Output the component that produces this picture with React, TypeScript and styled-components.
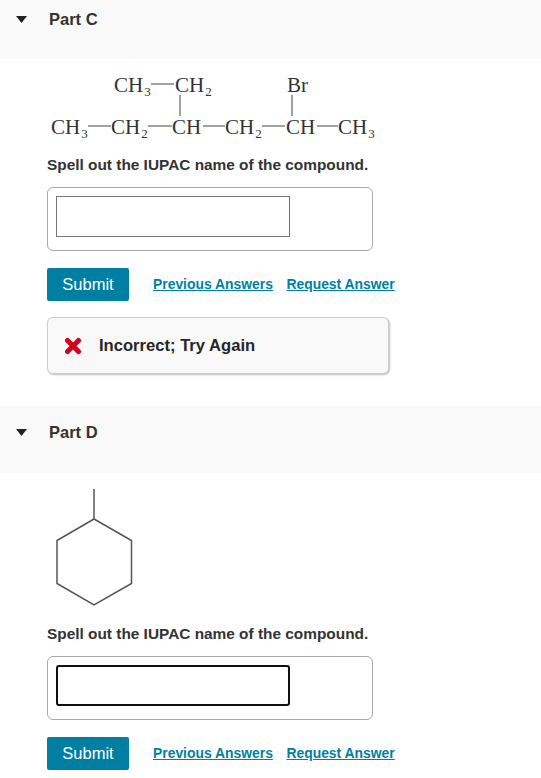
import styled, { createGlobalStyle } from 'styled-components';

const GlobalStyle = createGlobalStyle`
  html, body {
    margin: 0;
    padding: 0;
    background: #fff;
    overflow: hidden;
  }
  body {
    font-family: "Liberation Sans", Arial, sans-serif;
    color: #333;
  }
`;

// ========================
// Part header
// ========================

const PartHeader = styled.div<{ $scrolled?: boolean }>`
  display: flex;
  align-items: flex-start;
  height: ${({ $scrolled }) => ($scrolled ? '59px' : '67px')};
  padding-top: ${({ $scrolled }) => ($scrolled ? '10px' : '17px')};
  padding-left: 16px;
  box-sizing: border-box;
  background: #f9f9f9;
`;

const Caret = styled.svg`
  display: block;
  width: 11px;
  height: 7px;
  margin-top: 6px;
  margin-right: 22px;
  fill: #222;
`;

const PartTitle = styled.h2`
  margin: 0;
  font-size: 16.5px;
  line-height: 18px;
  font-weight: 700;
  color: #333;
`;

// ========================
// Part body
// ========================

const PartBody = styled.div`
  padding-left: 47px;
`;

const Figure = styled.div<{ $height: number }>`
  height: ${({ $height }) => $height}px;
  margin-left: -47px;
`;

const Prompt = styled.p`
  margin: 0 0 13px;
  font-size: 15.4px;
  line-height: 18px;
  font-weight: 700;
  color: #333;
`;

const AnswerBox = styled.div`
  width: 326px;
  height: 64px;
  box-sizing: border-box;
  padding: 8px;
  border: 1px solid #aaa;
  border-radius: 6px;
`;

const AnswerInput = styled.input<{ $focused?: boolean }>`
  display: block;
  width: 234px;
  height: 41px;
  box-sizing: border-box;
  padding: 0;
  background: #fff;
  outline: none;
  border: ${({ $focused }) => ($focused ? '2px solid #111' : '1px solid #757575')};
  border-radius: ${({ $focused }) => ($focused ? '3px' : '0')};
`;

const Actions = styled.div`
  display: flex;
  align-items: center;
  margin-top: 17px;
`;

const SubmitButton = styled.button`
  width: 82px;
  height: 33px;
  padding: 0;
  margin-right: 24px;
  border: 0;
  border-radius: 2px;
  background: #007fa3;
  color: #fff;
  font-family: inherit;
  font-size: 16.5px;
`;

const ActionLink = styled.a`
  margin-right: 13.500px;
  padding-bottom: 2px;
  font-size: 13.9px;
  font-weight: 700;
  color: #007fa3;
  text-decoration: underline;
`;

const Feedback = styled.div`
  display: flex;
  align-items: center;
  width: 342px;
  height: 57px;
  box-sizing: border-box;
  margin-top: 16px;
  margin-bottom: 32px;
  padding-left: 16px;
  background: #f9f9f9;
  border: 1px solid #ccc;
  border-radius: 6px;
  box-shadow: 1px 1px 2px rgba(0, 0, 0, 0.25);
`;

const CrossIcon = styled.svg`
  display: block;
  width: 18px;
  height: 18px;
  margin-right: 17px;
  stroke: #d0021b;
  stroke-width: 5;
  stroke-linecap: round;
`;

const FeedbackText = styled.span`
  font-size: 16.6px;
  font-weight: 700;
  color: #262626;
`;

// ========================
// Structure drawings
// ========================

const Drawing = styled.svg`
  display: block;
`;

const Formula = styled.text`
  font-family: "Liberation Serif", "Times New Roman", serif;
  font-size: 21px;
  fill: #333;
`;

const Bond = styled.line`
  stroke: #444;
  stroke-width: 1;
`;

const Sub = ({ n }: { n: number }) => (
  <tspan dy={3.5} dx={1} fontSize={13}>{n}</tspan>
);

const BromoStructure = () => (
  <Drawing width={541} height={96} viewBox="0 59 541 96">
    <Formula x={114} y={92}>CH<Sub n={3} /></Formula>
    <Formula x={175} y={92}>CH<Sub n={2} /></Formula>
    <Formula x={287} y={92}>Br</Formula>
    <Bond x1={151} y1={84} x2={174} y2={84} />
    <Bond x1={180} y1={95} x2={180} y2={116} />
    <Bond x1={292} y1={95} x2={292} y2={116} />
    <Formula x={51} y={134}>CH<Sub n={3} /></Formula>
    <Formula x={111} y={134}>CH<Sub n={2} /></Formula>
    <Formula x={172} y={134}>CH</Formula>
    <Formula x={225} y={134}>CH<Sub n={2} /></Formula>
    <Formula x={286} y={134}>CH</Formula>
    <Formula x={338} y={134}>CH<Sub n={3} /></Formula>
    <Bond x1={88} y1={126} x2={111} y2={126} />
    <Bond x1={148} y1={126} x2={172} y2={126} />
    <Bond x1={203} y1={126} x2={225} y2={126} />
    <Bond x1={262} y1={126} x2={285} y2={126} />
    <Bond x1={317} y1={126} x2={338} y2={126} />
  </Drawing>
);

const MethylCyclohexane = () => (
  <Drawing width={541} height={152} viewBox="0 473 541 152">
    <path
      d="M94 489V519L131.500 540.500V583.500L94 605L57 583.500V540.500L94 519"
      fill="none"
      stroke="#555"
      strokeWidth={1.5}
    />
  </Drawing>
);

// ========================
// Component
// ========================

const CaretIcon = () => (
  <Caret viewBox="0 0 11 7">
    <path d="M0 0H11L5.500 7Z" />
  </Caret>
);

const AnswerForm = ({ focused }: { focused?: boolean }) => (
  <>
    <Prompt>Spell out the IUPAC name of the compound.</Prompt>
    <AnswerBox>
      <AnswerInput type="text" $focused={focused} />
    </AnswerBox>
    <Actions>
      <SubmitButton>Submit</SubmitButton>
      <ActionLink href="#">Previous Answers</ActionLink>
      <ActionLink href="#">Request Answer</ActionLink>
    </Actions>
  </>
);

const App = () => (
  <>
    <GlobalStyle />
    <PartHeader $scrolled>
      <CaretIcon />
      <PartTitle>Part C</PartTitle>
    </PartHeader>
    <PartBody>
      <Figure $height={97}>
        <BromoStructure />
      </Figure>
      <AnswerForm />
      <Feedback>
        <CrossIcon viewBox="0 0 18 18">
          <path d="M3.500 3.500L14.500 14.500M14.500 3.500L3.500 14.500" />
        </CrossIcon>
        <FeedbackText>Incorrect; Try Again</FeedbackText>
      </Feedback>
    </PartBody>
    <PartHeader>
      <CaretIcon />
      <PartTitle>Part D</PartTitle>
    </PartHeader>
    <PartBody>
      <Figure $height={152}>
        <MethylCyclohexane />
      </Figure>
      <AnswerForm focused />
    </PartBody>
  </>
);

export default App;
